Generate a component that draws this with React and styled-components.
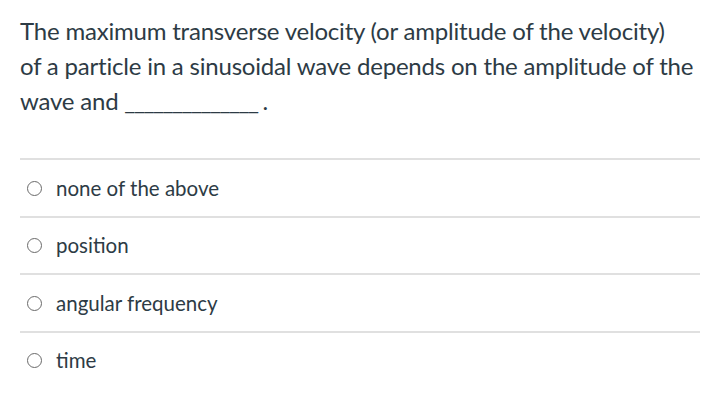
import React from "react";
import styled, { createGlobalStyle } from "styled-components";

const GlobalStyle = createGlobalStyle`
  html, body {
    margin: 0;
    padding: 0;
    background: #fff;
  }
  body {
    font-family: Lato, "Liberation Sans", sans-serif;
    color: #2d3b45;
  }
`;

const Page = styled.main`
  width: 712px;
  height: 406px;
  padding: 13px 12px 0 20px;
  box-sizing: border-box;
`;

const Question = styled.p`
  margin: 0 0 40px;
  font-size: 24px;
  line-height: 35px;
  letter-spacing: -0.2px;
  white-space: nowrap;
`;

const Blank = styled.span`
  display: inline-block;
  letter-spacing: -1.5px;
  margin-right: 5px;
`;

const Answers = styled.ul`
  list-style: none;
  margin: 0;
  padding: 0;
`;

const Answer = styled.li`
  display: flex;
  align-items: center;
  gap: 14px;
  height: 57.5px;
  border-top: 2px solid #e0e0e0;
  padding: 0 0 0 7px;
  box-sizing: border-box;
  font-size: 20.5px;
`;

const Radio = styled.span`
  width: 15px;
  height: 15px;
  border: 1.7px solid #6a6a6a;
  border-radius: 50%;
  box-sizing: border-box;
  flex-shrink: 0;
  margin-top: 1px;
`;

const options = ["none of the above", "position", "angular frequency", "time"];

export default function App() {
  return (
    <>
      <GlobalStyle />
      <Page>
        <Question>
          The maximum transverse velocity (or amplitude of the velocity)
          <br />
          of a particle in a sinusoidal wave depends on the amplitude of the
          <br />
          wave and <Blank>______________</Blank>.
        </Question>
        <Answers>
          {options.map((o) => (
            <Answer key={o}>
              <Radio />
              {o}
            </Answer>
          ))}
        </Answers>
      </Page>
    </>
  );
}
